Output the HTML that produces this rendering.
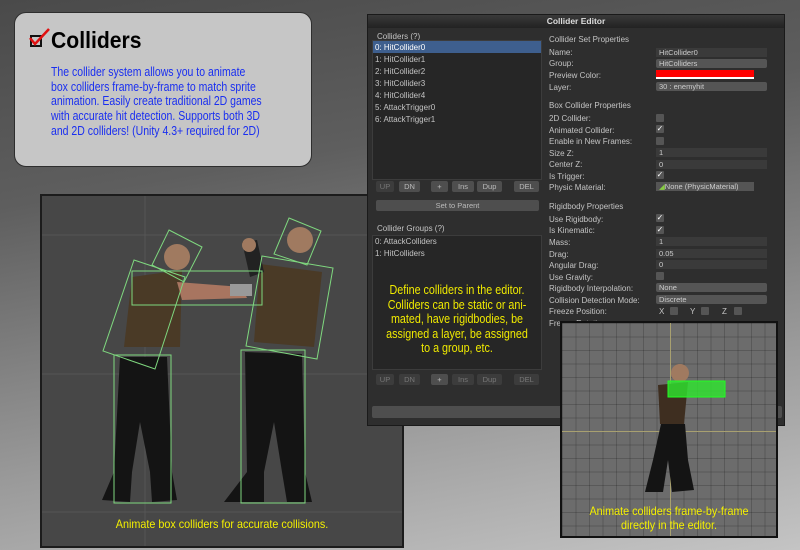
<!DOCTYPE html>
<html><head><meta charset="utf-8"><style>
*{margin:0;padding:0;box-sizing:border-box}
body{width:800px;height:550px;overflow:hidden;position:relative;font-family:"Liberation Sans",sans-serif;
background:linear-gradient(170deg,#4a4a4a 0%,#5e5e5e 30%,#9a9a9a 70%,#c4c4c4 100%)}
.a{position:absolute}
.info{left:14px;top:12px;width:298px;height:155px;border-radius:12px;background:#c6c6c6;border:1px solid #2e2e2e}
.info h1{position:absolute;left:36px;top:14px;font-size:23px;font-weight:bold;color:#000;transform:scaleX(.92);transform-origin:left}
.info p{position:absolute;left:36px;top:52px;font-size:12.5px;line-height:14.7px;color:#1a2ff0;white-space:nowrap;transform:scaleX(.84);transform-origin:left}
.ed{left:367px;top:14px;width:418px;height:412px;background:#2e2e2e;border:1px solid #1a1a1a}
.tb{left:0;top:0;width:100%;height:13px;background:linear-gradient(#3a3a3a,#222);color:#ddd;font-size:8.5px;font-weight:bold;text-align:center;line-height:13px}
.t{position:absolute;font-size:8px;color:#c4c4c4;white-space:nowrap}
.lst{position:absolute;background:#262626;border:1px solid #3c3c3c}
.btn{position:absolute;height:11px;background:#4e4e4e;border-radius:2px;font-size:7.5px;color:#bbb;text-align:center;line-height:11px}
.btn.d{background:#3c3c3c;color:#777}
.fld{position:absolute;left:288px;width:111px;height:9px;background:#3a3a3a;font-size:7.5px;color:#ccc;line-height:9px;padding-left:3px}
.dd{background:#555;border-radius:2px}
.cb{position:absolute;left:288px;width:8px;height:8px;background:#555;border-radius:1px;font-size:8px;color:#fff;line-height:8px;text-align:center}
.lp{left:40px;top:194px;width:364px;height:354px;background:#474747;border:2px solid #1c1c1c}
.rp{left:560px;top:321px;width:218px;height:217px;border:2px solid #111;
background-color:#6c6c6c;background-image:linear-gradient(90deg,rgba(0,0,0,.18) 1px,transparent 1px),linear-gradient(rgba(0,0,0,.18) 1px,transparent 1px);background-size:13.5px 13.5px}
.cap{position:absolute;color:#f4f000;font-size:12px;text-align:center;width:100%;transform:scaleX(.9)}
</style></head><body>

<div class="a info">
<svg class="a" style="left:14px;top:14px" width="22" height="22" viewBox="0 0 22 22"><rect x="2" y="9" width="10" height="10" fill="none" stroke="#111" stroke-width="2"/><path d="M1 11 L6 17 L20 2" fill="none" stroke="#e01010" stroke-width="2.5"/></svg>
<h1>Colliders</h1>
<p>The collider system allows you to animate<br>box colliders frame-by-frame to match sprite<br>animation. Easily create traditional 2D games<br>with accurate hit detection. Supports both 3D<br>and 2D colliders! (Unity 4.3+ required for 2D)</p>
</div>

<div class="a lp">
<svg class="a" style="left:0;top:0" width="360" height="350" viewBox="40 194 360 350">
<g stroke="#555" stroke-width="1"><line x1="143" y1="194" x2="143" y2="548"/><line x1="40" y1="233" x2="404" y2="233"/><line x1="40" y1="372" x2="404" y2="372"/><line x1="40" y1="510" x2="404" y2="510"/></g>
<g fill="#141414"><path d="M118 355 L165 355 L170 470 L175 498 L150 500 L148 470 L138 420 L130 470 L128 500 L100 498 L112 470 Z"/></g>
<path d="M130 275 L180 268 L178 345 L122 345 Z" fill="#4a3a26"/>
<path d="M175 280 L240 285 L245 296 L180 298 Z" fill="#a87560"/>
<rect x="228" y="282" width="22" height="12" fill="#999"/>
<circle cx="175" cy="255" r="13" fill="#a07a60"/>
<g fill="#141414"><path d="M243 350 L300 352 L303 470 L310 500 L285 500 L280 470 L272 420 L262 470 L262 500 L222 500 L245 470 Z"/></g>
<path d="M258 262 L320 270 L312 345 L252 340 Z" fill="#4a3a26"/>
<path d="M240 240 L255 238 L262 270 L248 275 Z" fill="#222"/>
<circle cx="247" cy="243" r="7" fill="#a07a60"/>
<circle cx="298" cy="238" r="13" fill="#a07a60"/>
<g fill="none" stroke="#7fd87f" stroke-width="1">
<polygon points="167,228 200,245 182,280 150,263"/>
<polygon points="132,258 183,275 153,367 101,349"/>
<rect x="130" y="269" width="130" height="34"/>
<rect x="112" y="353" width="57" height="148"/>
<polygon points="287,216 319,229 305,263 272,252"/>
<polygon points="260,254 331,266 315,357 244,344"/>
<rect x="239" y="348" width="64" height="153"/>
</g></svg>
<div class="cap" style="top:321px">Animate box colliders for accurate collisions.</div>
</div>

<div class="a ed">
<div class="a tb">Collider Editor</div>
<div class="t" style="left:9px;top:17px">Colliders (?)</div>
<div class="lst" style="left:4px;top:25px;width:170px;height:140px"></div>
<div class="a" style="left:5px;top:26px;width:168px;height:12px;background:#3e5f8e"></div>
<div class="t" style="left:7px;top:28px;color:#fff">0: HitCollider0</div>
<div class="t" style="left:7px;top:40px">1: HitCollider1</div>
<div class="t" style="left:7px;top:52px">2: HitCollider2</div>
<div class="t" style="left:7px;top:64px">3: HitCollider3</div>
<div class="t" style="left:7px;top:76px">4: HitCollider4</div>
<div class="t" style="left:7px;top:88px">5: AttackTrigger0</div>
<div class="t" style="left:7px;top:100px">6: AttackTrigger1</div>
<div class="btn d" style="left:8px;top:166px;width:18px">UP</div>
<div class="btn" style="left:31px;top:166px;width:21px">DN</div>
<div class="btn" style="left:63px;top:166px;width:17px">+</div>
<div class="btn" style="left:84px;top:166px;width:22px">Ins</div>
<div class="btn" style="left:109px;top:166px;width:25px">Dup</div>
<div class="btn" style="left:146px;top:166px;width:25px">DEL</div>
<div class="btn" style="left:8px;top:185px;width:163px">Set to Parent</div>
<div class="t" style="left:9px;top:209px">Collider Groups (?)</div>
<div class="lst" style="left:4px;top:220px;width:170px;height:135px"></div>
<div class="t" style="left:7px;top:222px">0: AttackColliders</div>
<div class="t" style="left:7px;top:234px">1: HitColliders</div>
<div class="a" style="left:-6px;top:268px;width:190px;text-align:center;color:#f0ea00;font-size:12.5px;line-height:14.6px;transform:scaleX(.86)">Define colliders in the editor.<br>Colliders can be static or ani-<br>mated, have rigidbodies, be<br>assigned a layer, be assigned<br>to a group, etc.</div>
<div class="btn d" style="left:8px;top:359px;width:18px">UP</div>
<div class="btn d" style="left:31px;top:359px;width:21px">DN</div>
<div class="btn" style="left:63px;top:359px;width:17px">+</div>
<div class="btn d" style="left:84px;top:359px;width:22px">Ins</div>
<div class="btn d" style="left:109px;top:359px;width:25px">Dup</div>
<div class="btn d" style="left:146px;top:359px;width:25px">DEL</div>
<div class="btn" style="left:4px;top:391px;width:410px;height:12px;line-height:12px;font-size:8px">Clear</div>

<div class="t" style="left:181px;top:20px">Collider Set Properties</div>
<div class="t" style="left:181px;top:33px">Name:</div><div class="fld" style="top:33px">HitCollider0</div>
<div class="t" style="left:181px;top:44px">Group:</div><div class="fld dd" style="top:44px">HitColliders</div>
<div class="t" style="left:181px;top:56px">Preview Color:</div><div class="fld" style="top:55px;width:98px;background:#f00;border-bottom:2px solid #fff"></div>
<div class="t" style="left:181px;top:68px">Layer:</div><div class="fld dd" style="top:67px">30 : enemyhit</div>
<div class="t" style="left:181px;top:86px">Box Collider Properties</div>
<div class="t" style="left:181px;top:99px">2D Collider:</div><div class="cb" style="top:99px"></div>
<div class="t" style="left:181px;top:111px">Animated Collider:</div><div class="cb" style="top:110px">✓</div>
<div class="t" style="left:181px;top:122px">Enable in New Frames:</div><div class="cb" style="top:122px"></div>
<div class="t" style="left:181px;top:134px">Size Z:</div><div class="fld" style="top:133px">1</div>
<div class="t" style="left:181px;top:145px">Center Z:</div><div class="fld" style="top:145px">0</div>
<div class="t" style="left:181px;top:157px">Is Trigger:</div><div class="cb" style="top:156px">✓</div>
<div class="t" style="left:181px;top:168px">Physic Material:</div><div class="fld" style="top:167px;width:98px;background:#555"><span style="color:#8c4">◢</span>None (PhysicMaterial)</div>
<div class="t" style="left:181px;top:187px">Rigidbody Properties</div>
<div class="t" style="left:181px;top:200px">Use Rigidbody:</div><div class="cb" style="top:199px">✓</div>
<div class="t" style="left:181px;top:211px">Is Kinematic:</div><div class="cb" style="top:211px">✓</div>
<div class="t" style="left:181px;top:223px">Mass:</div><div class="fld" style="top:222px">1</div>
<div class="t" style="left:181px;top:235px">Drag:</div><div class="fld" style="top:234px">0.05</div>
<div class="t" style="left:181px;top:246px">Angular Drag:</div><div class="fld" style="top:245px">0</div>
<div class="t" style="left:181px;top:258px">Use Gravity:</div><div class="cb" style="top:257px"></div>
<div class="t" style="left:181px;top:269px">Rigidbody Interpolation:</div><div class="fld dd" style="top:268px">None</div>
<div class="t" style="left:181px;top:281px">Collision Detection Mode:</div><div class="fld dd" style="top:280px">Discrete</div>
<div class="t" style="left:181px;top:292px">Freeze Position:</div>
<div class="t" style="left:291px;top:292px">X</div><div class="cb" style="left:302px;top:292px"></div>
<div class="t" style="left:322px;top:292px">Y</div><div class="cb" style="left:333px;top:292px"></div>
<div class="t" style="left:354px;top:292px">Z</div><div class="cb" style="left:366px;top:292px"></div>
<div class="t" style="left:181px;top:304px">Freeze Rotation:</div>
</div>

<div class="a rp">
<div class="a" style="left:108px;top:0;width:1px;height:100%;background:#a8a070"></div>
<div class="a" style="left:0;top:108px;width:100%;height:1px;background:#a8a070"></div>
<svg class="a" style="left:0;top:0" width="214" height="213" viewBox="562 323 214 213">
<path d="M661 424 L685 424 L688 460 L694 490 L672 492 L668 460 L663 492 L645 492 L653 460 Z" fill="#141414"/>
<path d="M658 385 L688 382 L684 424 L660 424 Z" fill="#3e2e20"/>
<circle cx="680" cy="373" r="9" fill="#a07a60"/>
<polygon points="668,381 725,381 725,397 668,397" fill="#2ee82e" fill-opacity=".8" stroke="#2f2" stroke-width="1"/>
</svg>
<div class="cap" style="top:181px;line-height:14px">Animate colliders frame-by-frame<br>directly in the editor.</div>
</div>
</body></html>
